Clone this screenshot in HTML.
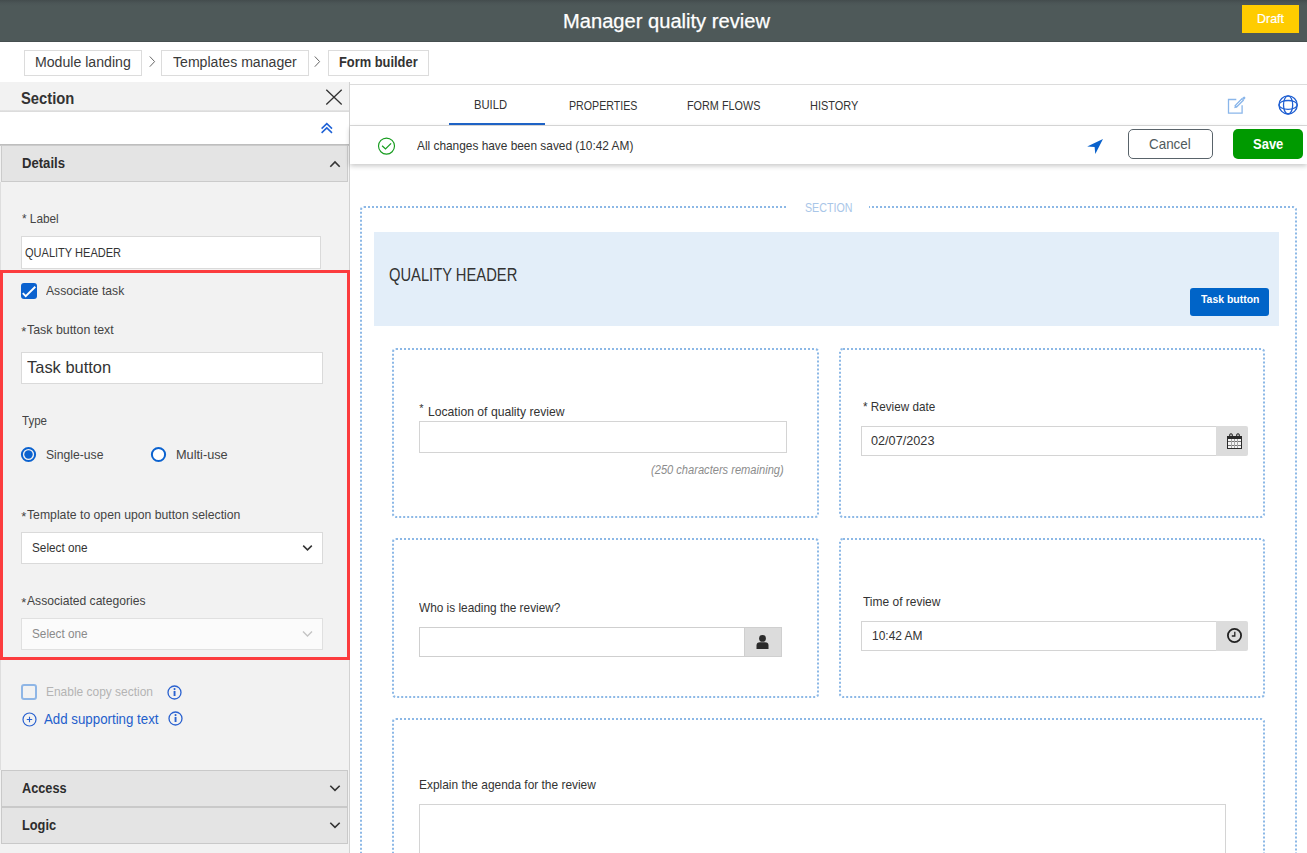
<!DOCTYPE html>
<html><head><meta charset="utf-8"><title>Manager quality review</title>
<style>
html,body{margin:0;padding:0;}
body{width:1307px;height:853px;overflow:hidden;position:relative;background:#fff;font-family:"Liberation Sans",sans-serif;}
.t{position:absolute;white-space:nowrap;}
.r{position:absolute;display:block;}
</style></head><body>
<div class="r" style="left:0px;top:0px;width:1307px;height:42px;background:linear-gradient(#434c4d 0px,#4b5556 3px,#4e5959 6px,#4e5959 100%);"></div>
<div class="r" style="left:0px;top:41px;width:1307px;height:1px;background:#464f50;"></div>
<div class="t" style="left:562.60px;top:10.67px;font-size:20px;line-height:20px;color:#fff;transform:scaleX(1.0061);transform-origin:0 0;-webkit-text-stroke:0.25px #fff;">Manager quality review</div>
<div class="r" style="left:1242px;top:5px;width:57px;height:28px;background:#ffcc00;"></div>
<div class="t" style="left:1257.00px;top:11.99px;font-size:13px;line-height:13px;color:#fff;transform:scaleX(0.9600);transform-origin:0 0;-webkit-text-stroke:0.2px #fff;">Draft</div>
<div class="r" style="left:24px;top:50px;width:118px;height:26px;border:1px solid #dcdcdc;box-sizing:border-box;background:#fff;"></div>
<div class="t" style="left:35.00px;top:55.15px;font-size:14px;line-height:14px;color:#3a3a3a;transform:scaleX(1.0084);transform-origin:0 0;">Module landing</div>
<svg class="r" style="left:148px;top:55px" width="9" height="13" viewBox="0 0 9 13"><path d="M1.8 1.5 L6.6 6.6 L1.8 11.7" fill="none" stroke="#666" stroke-width="1"/></svg>
<div class="r" style="left:161px;top:50px;width:148px;height:26px;border:1px solid #dcdcdc;box-sizing:border-box;background:#fff;"></div>
<div class="t" style="left:173.00px;top:55.15px;font-size:14px;line-height:14px;color:#3a3a3a;transform:scaleX(1.0065);transform-origin:0 0;">Templates manager</div>
<svg class="r" style="left:313px;top:55px" width="9" height="13" viewBox="0 0 9 13"><path d="M1.8 1.5 L6.6 6.6 L1.8 11.7" fill="none" stroke="#666" stroke-width="1"/></svg>
<div class="r" style="left:328px;top:50px;width:101px;height:26px;border:1px solid #dcdcdc;box-sizing:border-box;background:#fff;"></div>
<div class="t" style="left:339.00px;top:55.15px;font-size:14px;line-height:14px;color:#333;font-weight:700;transform:scaleX(0.9191);transform-origin:0 0;">Form builder</div>
<div class="r" style="left:0px;top:82px;width:350px;height:771px;background:#f2f2f2;"></div>
<div class="r" style="left:349px;top:82px;width:1px;height:771px;background:#d2d2d2;"></div>
<div class="r" style="left:0px;top:182px;width:1px;height:588px;background:#dedede;"></div>
<div class="t" style="left:20.60px;top:90.85px;font-size:16px;line-height:16px;color:#333;font-weight:700;transform:scaleX(0.9229);transform-origin:0 0;">Section</div>
<svg class="r" style="left:325px;top:88px" width="19" height="19" viewBox="0 0 19 19"><path d="M1.3 1.8 L16.7 16.5 M16.7 1.8 L1.3 16.5" fill="none" stroke="#333" stroke-width="1.3"/></svg>
<div class="r" style="left:0px;top:111px;width:349px;height:33px;background:#fff;"></div>
<div class="r" style="left:0px;top:110px;width:349px;height:2px;background:linear-gradient(#e6e6e6,#d9d9d9);"></div>
<svg class="r" style="left:320px;top:121px" width="14" height="14" viewBox="0 0 14 14"><path d="M1.6 7.6 L6.8 2.6 L12 7.6 M1.6 11.9 L6.8 6.9 L12 11.9" fill="none" stroke="#1f62d6" stroke-width="1.5"/></svg>
<div class="r" style="left:0px;top:144px;width:349px;height:2px;background:linear-gradient(#b8b8b8,#d0d0d0);"></div>
<div class="r" style="left:1px;top:145px;width:347px;height:37px;background:#e4e4e4;border:1px solid #cbcbcb;box-sizing:border-box;"></div>
<div class="t" style="left:22.40px;top:156.15px;font-size:14px;line-height:14px;color:#2d2d2d;font-weight:700;transform:scaleX(0.9351);transform-origin:0 0;">Details</div>
<svg class="r" style="left:328px;top:159px" width="14" height="10" viewBox="0 0 14 10"><path d="M2.3 7.8 L7 3 L11.7 7.8" fill="none" stroke="#333" stroke-width="1.6"/></svg>
<div class="t" style="left:21.60px;top:211.99px;font-size:13px;line-height:13px;color:#444;transform:scaleX(0.9062);transform-origin:0 0;">* Label</div>
<div class="r" style="left:21px;top:236px;width:300px;height:33px;background:#fff;border:1px solid #dadada;box-sizing:border-box;"></div>
<div class="t" style="left:25.00px;top:246.29px;font-size:13px;line-height:13px;color:#333;transform:scaleX(0.8486);transform-origin:0 0;">QUALITY HEADER</div>
<div class="r" style="left:0px;top:270px;width:350px;height:390px;border:3px solid #fc3c3e;box-sizing:border-box;"></div>
<div class="r" style="left:21px;top:283px;width:16px;height:16px;background:#0b62cf;border-radius:3px;"></div>
<svg class="r" style="left:21px;top:283px" width="16" height="16" viewBox="0 0 16 16"><path d="M1.8 10.1 L4.7 13.1 L14.3 3.7" fill="none" stroke="#fff" stroke-width="1.9"/></svg>
<div class="t" style="left:46.40px;top:283.99px;font-size:13px;line-height:13px;color:#444;transform:scaleX(0.9333);transform-origin:0 0;">Associate task</div>
<div class="t" style="left:21.30px;top:324.79px;font-size:13px;line-height:13px;color:#444;">*</div>
<div class="t" style="left:26.60px;top:322.99px;font-size:13px;line-height:13px;color:#444;transform:scaleX(0.9525);transform-origin:0 0;">Task button text</div>
<div class="r" style="left:21px;top:352px;width:302px;height:32px;background:#fff;border:1px solid #dadada;box-sizing:border-box;"></div>
<div class="t" style="left:27.00px;top:358.61px;font-size:17px;line-height:17px;color:#333;transform:scaleX(0.9678);transform-origin:0 0;">Task button</div>
<div class="t" style="left:21.60px;top:413.99px;font-size:13px;line-height:13px;color:#444;transform:scaleX(0.8853);transform-origin:0 0;">Type</div>
<svg class="r" style="left:20px;top:446px" width="17" height="17" viewBox="0 0 17 17"><circle cx="8.5" cy="8.5" r="6.6" fill="none" stroke="#0b62cf" stroke-width="2"/><circle cx="8.5" cy="8.5" r="4.2" fill="#0b62cf"/></svg>
<div class="t" style="left:46.40px;top:448.39px;font-size:13px;line-height:13px;color:#444;transform:scaleX(0.9352);transform-origin:0 0;">Single-use</div>
<svg class="r" style="left:150px;top:446px" width="17" height="17" viewBox="0 0 17 17"><circle cx="8.5" cy="8.5" r="6.6" fill="#fff" stroke="#0b62cf" stroke-width="2"/></svg>
<div class="t" style="left:176.30px;top:448.39px;font-size:13px;line-height:13px;color:#444;transform:scaleX(0.9801);transform-origin:0 0;">Multi-use</div>
<div class="t" style="left:21.30px;top:510.19px;font-size:13px;line-height:13px;color:#444;">*</div>
<div class="t" style="left:26.60px;top:508.39px;font-size:13px;line-height:13px;color:#444;transform:scaleX(0.9401);transform-origin:0 0;">Template to open upon button selection</div>
<div class="r" style="left:21px;top:532px;width:302px;height:32px;background:#fff;border:1px solid #dadada;box-sizing:border-box;"></div>
<div class="t" style="left:32.00px;top:541.29px;font-size:13px;line-height:13px;color:#333;transform:scaleX(0.9043);transform-origin:0 0;">Select one</div>
<svg class="r" style="left:301px;top:543px" width="13" height="10" viewBox="0 0 13 10"><path d="M2.2 2.6 L6.5 6.9 L10.8 2.6" fill="none" stroke="#333" stroke-width="1.5"/></svg>
<div class="t" style="left:21.30px;top:595.99px;font-size:13px;line-height:13px;color:#444;">*</div>
<div class="t" style="left:26.90px;top:594.19px;font-size:13px;line-height:13px;color:#444;transform:scaleX(0.9312);transform-origin:0 0;">Associated categories</div>
<div class="r" style="left:21px;top:618px;width:302px;height:32px;background:#fbfbfb;border:1px solid #e0e0e0;box-sizing:border-box;"></div>
<div class="t" style="left:32.00px;top:626.99px;font-size:13px;line-height:13px;color:#8a8a8a;transform:scaleX(0.9043);transform-origin:0 0;">Select one</div>
<svg class="r" style="left:301px;top:629px" width="13" height="10" viewBox="0 0 13 10"><path d="M2 2.5 L6.5 7 L11 2.5" fill="none" stroke="#c4c4c4" stroke-width="1.4"/></svg>
<div class="r" style="left:21px;top:684px;width:16px;height:16px;border:2px solid #8fb6e6;border-radius:3px;box-sizing:border-box;"></div>
<div class="t" style="left:46.40px;top:685.49px;font-size:13px;line-height:13px;color:#b4b4b4;transform:scaleX(0.9194);transform-origin:0 0;">Enable copy section</div>
<svg class="r" style="left:167px;top:685px" width="15" height="15" viewBox="0 0 15 15"><circle cx="7.5" cy="7.5" r="6.5" fill="none" stroke="#2a62d0" stroke-width="1.3"/><rect x="6.6" y="6" width="1.9" height="5" fill="#2a62d0"/><circle cx="7.55" cy="4.1" r="1.05" fill="#2a62d0"/></svg>
<svg class="r" style="left:22px;top:712px" width="15" height="15" viewBox="0 0 15 15"><circle cx="7.5" cy="7.5" r="6.5" fill="none" stroke="#2a62d0" stroke-width="1.2"/><path d="M7.5 4.8 V10.2 M4.8 7.5 H10.2" stroke="#2a62d0" stroke-width="1.1"/></svg>
<div class="t" style="left:43.50px;top:711.65px;font-size:14px;line-height:14px;color:#1f5fcc;transform:scaleX(0.9492);transform-origin:0 0;">Add supporting text</div>
<svg class="r" style="left:168px;top:711px" width="15" height="15" viewBox="0 0 15 15"><circle cx="7.5" cy="7.5" r="6.5" fill="none" stroke="#2a62d0" stroke-width="1.3"/><rect x="6.6" y="6" width="1.9" height="5" fill="#2a62d0"/><circle cx="7.55" cy="4.1" r="1.05" fill="#2a62d0"/></svg>
<div class="r" style="left:1px;top:770px;width:347px;height:37px;background:#e4e4e4;border:1px solid #c9c9c9;box-sizing:border-box;"></div>
<div class="t" style="left:22.40px;top:781.15px;font-size:14px;line-height:14px;color:#2d2d2d;font-weight:700;transform:scaleX(0.9082);transform-origin:0 0;">Access</div>
<svg class="r" style="left:328px;top:783px" width="14" height="10" viewBox="0 0 14 10"><path d="M2.3 2.7 L7 7.3 L11.7 2.7" fill="none" stroke="#333" stroke-width="1.6"/></svg>
<div class="r" style="left:1px;top:807px;width:347px;height:37px;background:#e4e4e4;border:1px solid #c9c9c9;box-sizing:border-box;"></div>
<div class="t" style="left:22.40px;top:818.15px;font-size:14px;line-height:14px;color:#2d2d2d;font-weight:700;transform:scaleX(0.9124);transform-origin:0 0;">Logic</div>
<svg class="r" style="left:328px;top:820px" width="14" height="10" viewBox="0 0 14 10"><path d="M2.3 2.7 L7 7.3 L11.7 2.7" fill="none" stroke="#333" stroke-width="1.6"/></svg>
<div class="r" style="left:350px;top:84px;width:957px;height:1px;background:#dcdcdc;"></div>
<div class="r" style="left:350px;top:125px;width:957px;height:1px;background:#dcdcdc;"></div>
<div class="t" style="left:474.30px;top:98.39px;font-size:13px;line-height:13px;color:#333;transform:scaleX(0.8627);transform-origin:0 0;">BUILD</div>
<div class="t" style="left:569.20px;top:99.39px;font-size:13px;line-height:13px;color:#333;transform:scaleX(0.8191);transform-origin:0 0;">PROPERTIES</div>
<div class="t" style="left:687.40px;top:99.39px;font-size:13px;line-height:13px;color:#333;transform:scaleX(0.8329);transform-origin:0 0;">FORM FLOWS</div>
<div class="t" style="left:810.40px;top:99.39px;font-size:13px;line-height:13px;color:#333;transform:scaleX(0.8418);transform-origin:0 0;">HISTORY</div>
<div class="r" style="left:449px;top:123px;width:96px;height:2px;background:#1f64c8;"></div>
<svg class="r" style="left:1226px;top:95px" width="21" height="21" viewBox="0 0 21 21"><path d="M10.3 4.5 H2.5 V18.1 H16.1 V10.3" fill="none" stroke="#8ab6ea" stroke-width="1.3"/><path d="M9.6 11.6 L16.9 4.3" stroke="#8ab6ea" stroke-width="3.4"/><path d="M10.4 10.8 L16.4 4.8" stroke="#fff" stroke-width="1.0"/><path d="M8.2 13.2 L8.9 10.2 L11.2 12.5 Z" fill="#8ab6ea"/><path d="M15.9 3.3 L17.3 1.9 Q18.2 1.2 19 2 Q19.8 2.8 19.1 3.7 L17.7 5.1 Z" fill="#8ab6ea"/></svg>
<svg class="r" style="left:1277px;top:94px" width="22" height="22" viewBox="0 0 22 22"><g fill="none" stroke="#1f5fd2" stroke-width="1.3"><circle cx="11.1" cy="10.9" r="9.1"/><ellipse cx="11.1" cy="10.9" rx="4.6" ry="9.1"/><ellipse cx="11.1" cy="10.9" rx="9.1" ry="4.4"/></g></svg>
<div class="r" style="left:350px;top:126px;width:957px;height:38px;background:#fff;box-shadow:0 2px 5px rgba(0,0,0,0.22);"></div>
<svg class="r" style="left:377px;top:137px" width="19" height="19" viewBox="0 0 19 19"><circle cx="9.5" cy="9.1" r="8.0" fill="none" stroke="#169c1e" stroke-width="1.15"/><path d="M5.1 8.8 L8.5 12 L14.1 6.4" fill="none" stroke="#169c1e" stroke-width="1.25"/></svg>
<div class="t" style="left:417.00px;top:139.29px;font-size:13px;line-height:13px;color:#333;transform:scaleX(0.9127);transform-origin:0 0;">All changes have been saved (10:42 AM)</div>
<svg class="r" style="left:1086px;top:138px" width="18" height="18" viewBox="0 0 18 18"><path d="M1.2 8.4 L17 1.1 L9.3 16 L8.6 9.1 Z" fill="#0a62cc"/></svg>
<div class="r" style="left:1128px;top:129px;width:85px;height:30px;border:1px solid #59636a;border-radius:5px;box-sizing:border-box;background:#fff;"></div>
<div class="t" style="left:1149.00px;top:136.20px;font-size:15px;line-height:15px;color:#4f5a5c;transform:scaleX(0.8941);transform-origin:0 0;">Cancel</div>
<div class="r" style="left:1233px;top:129px;width:70px;height:30px;background:#009a00;border-radius:5px;"></div>
<div class="t" style="left:1252.70px;top:136.30px;font-size:15px;line-height:15px;color:#fff;font-weight:700;transform:scaleX(0.8657);transform-origin:0 0;">Save</div>
<div class="r" style="left:360px;top:206px;width:937px;height:700px;border:2px dotted #8cb8e6;border-radius:4px;box-sizing:border-box;"></div>
<div class="r" style="left:788px;top:200px;width:81px;height:14px;background:#fff;"></div>
<div class="t" style="left:805.00px;top:200.99px;font-size:13px;line-height:13px;color:#a9c6e8;transform:scaleX(0.8208);transform-origin:0 0;">SECTION</div>
<div class="r" style="left:374px;top:232px;width:905px;height:94px;background:#e3eef9;"></div>
<div class="t" style="left:389.00px;top:266.06px;font-size:18px;line-height:18px;color:#333;transform:scaleX(0.8185);transform-origin:0 0;">QUALITY HEADER</div>
<div class="r" style="left:1190px;top:288px;width:79px;height:28px;background:#0064c8;border-radius:3px;"></div>
<div class="t" style="left:1200.80px;top:293.69px;font-size:11px;line-height:11px;color:#fff;font-weight:700;transform:scaleX(0.9496);transform-origin:0 0;">Task button</div>
<div class="r" style="left:392px;top:348px;width:427px;height:170px;border:2px dotted #8cb8e6;border-radius:4px;box-sizing:border-box;"></div>
<div class="t" style="left:419.30px;top:402.69px;font-size:11px;line-height:11px;color:#333;">*</div>
<div class="t" style="left:428.00px;top:404.99px;font-size:13px;line-height:13px;color:#333;transform:scaleX(0.9355);transform-origin:0 0;">Location of quality review</div>
<div class="r" style="left:419px;top:421px;width:368px;height:32px;border:1px solid #d4d4d4;box-sizing:border-box;background:#fff;"></div>
<div class="t" style="left:651.00px;top:463.84px;font-size:12px;line-height:12px;color:#8c8c8c;font-style:italic;transform:scaleX(0.9255);transform-origin:0 0;">(250 characters remaining)</div>
<div class="r" style="left:839px;top:348px;width:426px;height:170px;border:2px dotted #8cb8e6;border-radius:4px;box-sizing:border-box;"></div>
<div class="t" style="left:863.00px;top:399.99px;font-size:13px;line-height:13px;color:#333;transform:scaleX(0.8997);transform-origin:0 0;">* Review date</div>
<div class="r" style="left:861px;top:426px;width:356px;height:30px;border:1px solid #d4d4d4;box-sizing:border-box;background:#fff;"></div>
<div class="t" style="left:871.30px;top:433.99px;font-size:13px;line-height:13px;color:#333;transform:scaleX(0.9750);transform-origin:0 0;">02/07/2023</div>
<div class="r" style="left:1216px;top:426px;width:32px;height:30px;background:#dcdcdc;border-radius:0 2px 2px 0;"></div>
<svg class="r" style="left:1227px;top:433px" width="15" height="16" viewBox="0 0 15 16"><g shape-rendering="crispEdges"><rect x="0" y="3" width="15" height="13" fill="#2a2a2a"/><rect x="1" y="6" width="13" height="9" fill="#f4f4f4"/><rect x="1" y="8" width="13" height="1" fill="#777"/><rect x="1" y="12" width="13" height="1" fill="#777"/><rect x="4" y="6" width="1" height="9" fill="#a8a8a8"/><rect x="7" y="6" width="1" height="9" fill="#a8a8a8"/><rect x="10" y="6" width="1" height="9" fill="#a8a8a8"/></g><path d="M2.7 4 V1.8 Q4 -0.2 5.3 1.8 V4 M9.7 4 V1.8 Q11 -0.2 12.3 1.8 V4" fill="none" stroke="#2a2a2a" stroke-width="1.1"/></svg>
<div class="r" style="left:392px;top:538px;width:427px;height:160px;border:2px dotted #8cb8e6;border-radius:4px;box-sizing:border-box;"></div>
<div class="t" style="left:419.30px;top:600.99px;font-size:13px;line-height:13px;color:#333;transform:scaleX(0.9101);transform-origin:0 0;">Who is leading the review?</div>
<div class="r" style="left:419px;top:627px;width:326px;height:30px;border:1px solid #cfcfcf;box-sizing:border-box;background:#fff;"></div>
<div class="r" style="left:744px;top:627px;width:38px;height:30px;border:1px solid #cfcfcf;box-sizing:border-box;background:#dcdcdc;"></div>
<svg class="r" style="left:755px;top:634px" width="15" height="16" viewBox="0 0 15 16"><circle cx="7.5" cy="4.4" r="3.4" fill="#2b2b2b"/><path d="M1.5 15 V11.5 Q1.5 8.3 5 8.3 H10 Q13.5 8.3 13.5 11.5 V15 Z" fill="#2b2b2b"/></svg>
<div class="r" style="left:839px;top:538px;width:426px;height:160px;border:2px dotted #8cb8e6;border-radius:4px;box-sizing:border-box;"></div>
<div class="t" style="left:863.00px;top:594.99px;font-size:13px;line-height:13px;color:#333;transform:scaleX(0.9212);transform-origin:0 0;">Time of review</div>
<div class="r" style="left:861px;top:621px;width:356px;height:30px;border:1px solid #d4d4d4;box-sizing:border-box;background:#fff;"></div>
<div class="t" style="left:871.60px;top:629.29px;font-size:13px;line-height:13px;color:#333;transform:scaleX(0.9203);transform-origin:0 0;">10:42 AM</div>
<div class="r" style="left:1216px;top:621px;width:32px;height:30px;background:#dcdcdc;border-radius:0 2px 2px 0;"></div>
<svg class="r" style="left:1226px;top:627px" width="17" height="17" viewBox="0 0 17 17"><circle cx="8.5" cy="8.5" r="6.6" fill="none" stroke="#222" stroke-width="1.8"/><path d="M8.8 4.8 V9 H5.8" fill="none" stroke="#222" stroke-width="1.3"/></svg>
<div class="r" style="left:392px;top:718px;width:873px;height:200px;border:2px dotted #8cb8e6;border-radius:4px;box-sizing:border-box;"></div>
<div class="t" style="left:419.30px;top:777.99px;font-size:13px;line-height:13px;color:#333;transform:scaleX(0.9165);transform-origin:0 0;">Explain the agenda for the review</div>
<div class="r" style="left:419px;top:804px;width:807px;height:100px;border:1px solid #d4d4d4;box-sizing:border-box;background:#fff;"></div>
</body></html>
